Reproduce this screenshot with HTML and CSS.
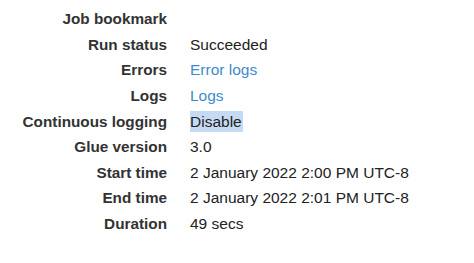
FILE: index.html
```html
<!DOCTYPE html>
<html lang="en">
<head>
    <meta charset="UTF-8">
    <title>Job run details</title>
    <link rel="stylesheet" href="styles.css">
</head>
<body>
    <dl class="details">
        <dt>Job bookmark</dt>
        <dd></dd>
        <dt>Run status</dt>
        <dd>Succeeded</dd>
        <dt>Errors</dt>
        <dd><a href="#">Error logs</a></dd>
        <dt>Logs</dt>
        <dd><a href="#">Logs</a></dd>
        <dt>Continuous logging</dt>
        <dd><span class="selected">Disable</span></dd>
        <dt>Glue version</dt>
        <dd>3.0</dd>
        <dt>Start time</dt>
        <dd>2 January 2022 2:00 PM UTC-8</dd>
        <dt>End time</dt>
        <dd>2 January 2022 2:01 PM UTC-8</dd>
        <dt>Duration</dt>
        <dd>49 secs</dd>
    </dl>
</body>
</html>
```

FILE: styles.css
```css
body {
    margin: 0;
    background: #fff;
    font-family: "Liberation Sans", Arial, sans-serif;
    color: #222;
}
.details {
    display: grid;
    grid-template-columns: 167px auto;
    grid-auto-rows: 25.6px;
    column-gap: 23px;
    align-items: center;
    margin: 6.5px 0 0 0;
    font-size: 15.5px;
}
.details dt {
    text-align: right;
    font-weight: bold;
    font-size: 15.3px;
    color: #333;
}
.details dd {
    margin: 0;
}
.details a {
    color: #3d8bcd;
    text-decoration: none;
}
.selected {
    background: #c6dbf3;
    padding: 2px 1px 2px 0;
}
```
